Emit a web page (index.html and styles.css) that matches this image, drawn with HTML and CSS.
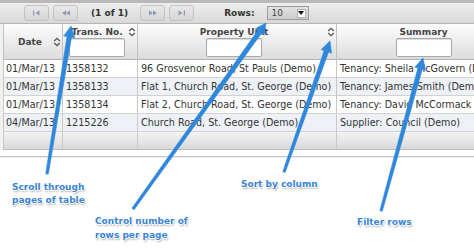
FILE: index.html
```html
<!DOCTYPE html>
<html lang="en">
<head>
    <meta charset="UTF-8">
    <title>Transactions grid</title>
    <link rel="stylesheet" href="styles.css">
</head>
<body>
    <div class="grid">
        <div class="top-band"></div>
        <div class="pager">
            <span class="pg-btn"><svg width="9" height="6" viewBox="0 0 9 6"><rect x="1" y="0.5" width="1.2" height="5" fill="#8d9cb2"/><path d="M7.5 0.5 L3.5 3 L7.5 5.5 Z" fill="#8d9cb2"/></svg></span>
            <span class="pg-btn"><svg width="10" height="6" viewBox="0 0 10 6"><path d="M5 0.5 L1 3 L5 5.5 Z M9 0.5 L5 3 L9 5.5 Z" fill="#8d9cb2"/></svg></span>
            <span class="pg-info">(1 of 1)</span>
            <span class="pg-btn"><svg width="10" height="6" viewBox="0 0 10 6"><path d="M1 0.5 L5 3 L1 5.5 Z M5 0.5 L9 3 L5 5.5 Z" fill="#8d9cb2"/></svg></span>
            <span class="pg-btn"><svg width="9" height="6" viewBox="0 0 9 6"><path d="M1.5 0.5 L5.5 3 L1.5 5.5 Z" fill="#8d9cb2"/><rect x="6.8" y="0.5" width="1.2" height="5" fill="#8d9cb2"/></svg></span>
            <span class="rows-label">Rows:</span>
            <div class="rows-select">
                <span class="rows-value">10</span>
                <span class="rows-drop"><svg width="6" height="4" viewBox="0 0 6 4"><path d="M0 0 H6 L3 4 Z" fill="#111"/></svg></span>
            </div>
        </div>
        <div class="table-wrap">
            <table class="data">
                <colgroup>
                    <col class="c-date">
                    <col class="c-trans">
                    <col class="c-prop">
                    <col class="c-sum">
                </colgroup>
                <thead>
                    <tr>
                        <th class="th-date">
                            <div class="hd">
                                <span class="hd-title">Date</span>
                                <svg class="sort" width="8" height="10" viewBox="0 0 8 10"><path d="M1.2 4 L4 1.3 L6.8 4 M1.2 6 L4 8.7 L6.8 6" fill="none" stroke="#555" stroke-width="1.3"/></svg>
                            </div>
                        </th>
                        <th>
                            <div class="hd">
                                <span class="hd-title">Trans. No.</span>
                                <svg class="sort" width="8" height="10" viewBox="0 0 8 10"><path d="M1.2 4 L4 1.3 L6.8 4 M1.2 6 L4 8.7 L6.8 6" fill="none" stroke="#555" stroke-width="1.3"/></svg>
                                <input class="filter" type="text">
                            </div>
                        </th>
                        <th>
                            <div class="hd">
                                <span class="hd-title">Property Unit</span>
                                <svg class="sort" width="8" height="10" viewBox="0 0 8 10"><path d="M1.2 4 L4 1.3 L6.8 4 M1.2 6 L4 8.7 L6.8 6" fill="none" stroke="#555" stroke-width="1.3"/></svg>
                                <input class="filter" type="text">
                            </div>
                        </th>
                        <th>
                            <div class="hd">
                                <span class="hd-title">Summary</span>
                                <span class="sort"></span>
                                <input class="filter" type="text">
                            </div>
                        </th>
                    </tr>
                </thead>
                <tbody>
                    <tr>
                        <td>01/Mar/13</td>
                        <td>1358132</td>
                        <td>96 Grosvenor Road, St Pauls (Demo)</td>
                        <td>Tenancy: Sheila McGovern (Demo)</td>
                    </tr>
                    <tr class="alt">
                        <td>01/Mar/13</td>
                        <td>1358133</td>
                        <td>Flat 1, Church Road, St. George (Demo)</td>
                        <td>Tenancy: James Smith (Demo)</td>
                    </tr>
                    <tr>
                        <td>01/Mar/13</td>
                        <td>1358134</td>
                        <td>Flat 2, Church Road, St. George (Demo)</td>
                        <td>Tenancy: David McCormack</td>
                    </tr>
                    <tr class="alt">
                        <td>04/Mar/13</td>
                        <td>1215226</td>
                        <td>Church Road, St. George (Demo)</td>
                        <td>Supplier: Council (Demo)</td>
                    </tr>
                    <tr class="empty">
                        <td></td>
                        <td></td>
                        <td></td>
                        <td></td>
                    </tr>
                </tbody>
            </table>
        </div>
        <div class="rule"></div>
    </div>

    <!-- callouts drawn over the grid, each arrow tapers toward its tail -->
    <svg class="arrows" width="474" height="249" viewBox="0 0 474 249">
        <polygon class="arrow" points="48.3,174.2 71.5,37.2 74.7,37.7 71,26 63.8,36 67,36.5 45.7,173.8"/>
        <polygon class="arrow" points="134.1,209.8 261.5,33.3 264.1,35.2 266,23 255.1,28.8 257.7,30.6 131.9,208.2"/>
        <polygon class="arrow" points="285.2,172.4 328.5,52.1 331.5,53.2 330,41 321.2,49.6 324.2,50.6 282.8,171.6"/>
        <polygon class="arrow" points="382.3,211.3 422.3,69.2 425.4,70.1 423,58 414.8,67.2 417.9,68 379.8,210.7"/>
    </svg>
    <div class="note note-scroll">Scroll through<br>pages of table</div>
    <div class="note note-rows">Control number of<br>rows per page</div>
    <div class="note note-sort">Sort by column</div>
    <div class="note note-filter">Filter rows</div>
</body>
</html>
```

FILE: styles.css
```css
* {
    box-sizing: border-box;
}

body {
    margin: 0;
    width: 474px;
    height: 249px;
    overflow: hidden;
    position: relative;
    background: #fff;
    font-family: "DejaVu Sans", Verdana, sans-serif;
    color: #333;
}

.grid {
    width: 474px;
    overflow: hidden;
}

.top-band {
    height: 3px;
    background: #b9b9b9;
}

.pager {
    height: 21px;
    display: flex;
    align-items: center;
    padding-left: 24px;
    background: linear-gradient(#eeeeee, #d8d8d8);
    border-bottom: 1px solid #b5b5b5;
}

.pg-btn {
    width: 25px;
    height: 16px;
    margin-right: 4px;
    display: flex;
    align-items: center;
    justify-content: center;
    border: 1px solid #c3c3c3;
    border-radius: 3px;
    background: linear-gradient(#e9e9e9, #d5d5d5);
}

.pg-info {
    margin: 0 12px 0 9px;
    font-size: 9px;
    font-weight: bold;
    color: #333;
}

.rows-label {
    margin-left: 26px;
    margin-right: 12px;
    font-size: 9px;
    font-weight: bold;
    color: #333;
}

.rows-select {
    width: 42px;
    height: 14px;
    display: flex;
    align-items: center;
    justify-content: space-between;
    padding: 0 2px 0 4px;
    border: 1px solid #9c9c9c;
    background: linear-gradient(#e2e2e2, #cdcdcd);
    font-size: 9px;
    color: #444;
}

.rows-drop {
    width: 9px;
    height: 9px;
    display: flex;
    align-items: center;
    justify-content: center;
    background: #fff;
    border: 1px solid #b0b0b0;
}

.table-wrap {
    padding-left: 3px;
    background: #f1f1f1;
}

.data {
    table-layout: fixed;
    width: 514px;
    border-collapse: separate;
    border-spacing: 0;
    font-size: 9.6px;
}

.c-date { width: 60px; }
.c-trans { width: 75px; }
.c-prop { width: 199px; }
.c-sum { width: 180px; }

.data th {
    height: 36px;
    padding: 3px 1px 2px 3px;
    vertical-align: top;
    background: linear-gradient(#fdfdfd, #dcdcdc);
    border-right: 1px solid #c2c2c2;
    border-bottom: 1px solid #b3b3b3;
    font-size: 9px;
    font-weight: bold;
    color: #444;
}

.data th.th-date {
    vertical-align: middle;
    border-left: 1px solid #c2c2c2;
}

.hd {
    display: grid;
    grid-template-columns: 1fr 8px;
    align-items: center;
}

.hd-title {
    grid-column: 1;
    grid-row: 1;
    text-align: center;
    line-height: 10px;
    white-space: nowrap;
}

.sort {
    grid-column: 2;
    grid-row: 1;
}

.filter {
    grid-column: 1;
    grid-row: 2;
    justify-self: center;
    width: 56px;
    height: 19px;
    margin: 1px 0 0;
    padding: 0;
    border: 1px solid #a9a9a9;
    border-radius: 2px;
    background: #fff;
    box-shadow: inset 0 1px 1px rgba(0, 0, 0, 0.15);
}

.data td {
    height: 18px;
    padding: 0 2px 0 3px;
    white-space: nowrap;
    overflow: hidden;
    background: #fff;
    border-right: 1px solid #c8c8c8;
    border-bottom: 1px solid #d2d2d2;
}

.data td:first-child {
    padding-left: 2px;
    border-left: 1px solid #c8c8c8;
}

.data tr.alt td {
    background: #eef2f6;
}

.data tr.empty td {
    background: linear-gradient(#f3f3f3, #d9d9d9);
    border-bottom: 1px solid #bdbdbd;
}

.rule {
    margin-top: 6px;
    height: 2px;
    border-top: 1px solid #c6c6c6;
    background: #ececec;
}

.arrows {
    position: absolute;
    left: 0;
    top: 0;
    pointer-events: none;
}

.arrow {
    fill: #2f87dc;
    stroke: #2f87dc;
    stroke-width: 0.6;
    stroke-linejoin: round;
}

.note {
    position: absolute;
    font-size: 9px;
    font-weight: bold;
    line-height: 13px;
    color: #3a84d6;
    white-space: nowrap;
    text-shadow: -1px 0 0 #fff, 1px 0 0 #fff, 0 -1px 0 #fff, 0 1px 0 #fff, 1px 2px 2px rgba(0, 0, 0, 0.35);
}

.note-scroll {
    left: 12px;
    top: 181px;
}

.note-rows {
    left: 95px;
    top: 214px;
    line-height: 14px;
}

.note-sort {
    left: 241px;
    top: 178px;
}

.note-filter {
    left: 357px;
    top: 216px;
}
```
